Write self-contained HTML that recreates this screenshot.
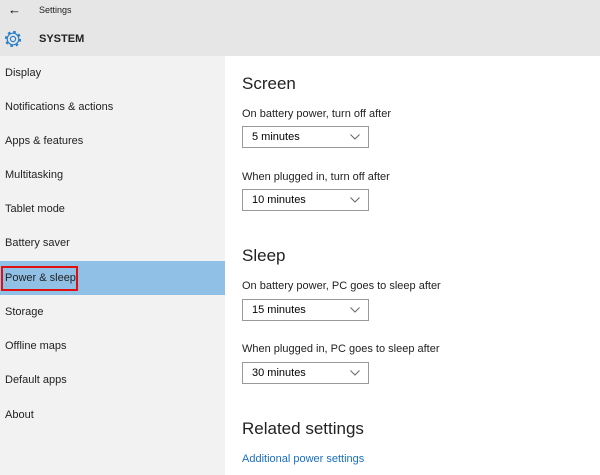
<!DOCTYPE html><html><head><style>
body{margin:0;width:600px;height:475px;overflow:hidden;font-family:"Liberation Sans",sans-serif;background:#fff;position:relative}
.hdr{position:absolute;left:0;top:0;width:600px;height:56px;background:#e6e6e6}
.side{position:absolute;left:0;top:56px;width:225px;height:419px;background:#f2f2f2}
.it{position:absolute;left:5px;font-size:11px;color:#222}
.sel{position:absolute;left:0;top:261px;width:225px;height:34px;background:#90c0e6}
.red{position:absolute;left:1px;top:266px;width:73px;height:21px;border:2px solid #e01010}
h2{position:absolute;left:242px;margin:0;font-weight:normal;font-size:17px;color:#222}
.lb{position:absolute;left:242px;font-size:11px;color:#222}
.dd{position:absolute;left:242px;width:125px;height:20px;border:1.5px solid #999;background:#fff;font-size:11px;box-sizing:content-box}
.dd span{position:absolute;left:9px;top:4px}
.dd svg{position:absolute;right:8px;top:7px}
</style></head><body>
<div class="hdr"></div>
<div style="position:absolute;left:8px;top:2px;font-size:13px">&#8592;</div>
<div style="position:absolute;left:39px;top:5px;font-size:9px;color:#222">Settings</div>
<svg style="position:absolute;left:3px;top:29px" width="20" height="20" viewBox="0 0 20 20"><circle cx="10" cy="10" r="7" fill="none" stroke="#2a7fc9" stroke-width="2.2" stroke-dasharray="2.6 2.9"/><circle cx="10" cy="10" r="5.8" fill="none" stroke="#2a7fc9" stroke-width="1.2"/><circle cx="10" cy="10" r="2.6" fill="none" stroke="#2a7fc9" stroke-width="1.2"/></svg>
<div style="position:absolute;left:39px;top:33px;font-size:11px;font-weight:bold;color:#222">SYSTEM</div>
<div class="side"></div>
<div class="sel"></div>
<div class="it" style="top:67px">Display</div>
<div class="it" style="top:101px">Notifications &amp; actions</div>
<div class="it" style="top:135px">Apps &amp; features</div>
<div class="it" style="top:169px">Multitasking</div>
<div class="it" style="top:203px">Tablet mode</div>
<div class="it" style="top:237px">Battery saver</div>
<div class="it" style="top:272px">Power &amp; sleep</div>
<div class="red"></div>
<div class="it" style="top:306px">Storage</div>
<div class="it" style="top:340px">Offline maps</div>
<div class="it" style="top:374px">Default apps</div>
<div class="it" style="top:409px">About</div>
<h2 style="top:74px">Screen</h2>
<div class="lb" style="top:108px">On battery power, turn off after</div>
<div class="dd" style="top:126px"><span>5 minutes</span><svg width="10" height="6"><path d="M0.5 0.5L5 5 9.5 0.5" fill="none" stroke="#666"/></svg></div>
<div class="lb" style="top:171px">When plugged in, turn off after</div>
<div class="dd" style="top:189px"><span>10 minutes</span><svg width="10" height="6"><path d="M0.5 0.5L5 5 9.5 0.5" fill="none" stroke="#666"/></svg></div>
<h2 style="top:246px">Sleep</h2>
<div class="lb" style="top:280px">On battery power, PC goes to sleep after</div>
<div class="dd" style="top:299px"><span>15 minutes</span><svg width="10" height="6"><path d="M0.5 0.5L5 5 9.5 0.5" fill="none" stroke="#666"/></svg></div>
<div class="lb" style="top:343px">When plugged in, PC goes to sleep after</div>
<div class="dd" style="top:362px"><span>30 minutes</span><svg width="10" height="6"><path d="M0.5 0.5L5 5 9.5 0.5" fill="none" stroke="#666"/></svg></div>
<h2 style="top:419px">Related settings</h2>
<div class="lb" style="top:453px;color:#1a6fbf">Additional power settings</div>
</body></html>
